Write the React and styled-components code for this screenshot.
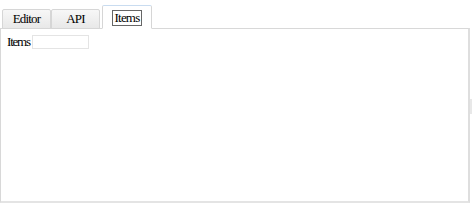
import styled, { createGlobalStyle } from "styled-components";

const Global = createGlobalStyle`
  body {
    margin: 0;
    background: #fff;
    font-family: "Liberation Serif", "Times New Roman", serif;
    font-size: 11px;
    color: #000;
  }
`;

const Wrapper = styled.div`
  padding-top: 5px;
  width: 472px;
  display: flex;
  flex-direction: column;
`;

const TabBar = styled.div`
  display: flex;
  align-items: flex-end;
  padding-left: 2px;
  height: 23px;
`;

const Tab = styled.div`
  width: ${(p) => (p.active ? "50px" : "49px")};
  height: ${(p) => (p.active ? "24px" : "20px")};
  box-sizing: border-box;
  display: flex;
  align-items: center;
  justify-content: center;
  border: 1px solid #d6d6d6;
  border-top-color: ${(p) => (p.active ? "#c9dcf0" : "#d6d6d6")};
  border-bottom-color: ${(p) => (p.active ? "#fff" : "#d6d6d6")};
  border-radius: 2px 2px 0 0;
  background: ${(p) =>
    p.active ? "#fff" : "linear-gradient(#f7f7f7, #e8e8e8)"};
  margin-left: ${(p) => (p.active ? "2px" : "0")};
  padding-top: ${(p) => (p.active ? "2px" : "0")};
  margin-bottom: -1px;
  position: relative;
  z-index: 1;
  font-size: 13px;
  letter-spacing: -0.8px;
`;

const Label = styled.span`
  outline: ${(p) => (p.focus ? "1px solid #666" : "none")};
  padding: 0 2px;
  line-height: 14px;
`;

const PanelRow = styled.div`
  display: flex;
  align-items: center;
`;

const Panel = styled.div`
  flex: 1;
  border: 1px solid #d8d8d8;
  border-right: 2px solid #dedede;
  border-bottom: 2px solid #e4e4e4;
  height: 175px;
  box-sizing: border-box;
  padding: 5px 6px;
`;

const Grip = styled.div`
  width: 2px;
  height: 15px;
  background: #e8e8e8;
  margin-top: -18px;
`;

const Row = styled.div`
  display: flex;
  align-items: center;
  gap: 2px;
`;

const Text = styled.span`
  font-size: 13px;
  letter-spacing: -1.2px;
`;

const Input = styled.input`
  width: 57px;
  height: 14px;
  box-sizing: border-box;
  border: 1px solid #e4e4e4;
  padding: 0;
  outline: none;
`;

const tabs = ["Editor", "API", "Items"];

export default function App() {
  return (
    <Wrapper>
      <Global />
      <TabBar>
        {tabs.map((t) => (
          <Tab key={t} active={t === "Items"}>
            <Label focus={t === "Items"}>{t}</Label>
          </Tab>
        ))}
      </TabBar>
      <PanelRow>
        <Panel>
          <Row>
            <Text>Items</Text>
            <Input />
          </Row>
        </Panel>
        <Grip />
      </PanelRow>
    </Wrapper>
  );
}
